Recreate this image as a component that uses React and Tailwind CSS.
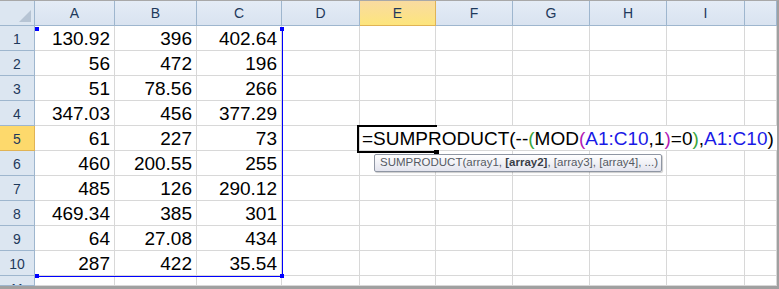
import React from 'react';

const cols = ['A', 'B', 'C', 'D', 'E', 'F', 'G', 'H', 'I', ''];

const data = [
  ['130.92', '396', '402.64'],
  ['56', '472', '196'],
  ['51', '78.56', '266'],
  ['347.03', '456', '377.29'],
  ['61', '227', '73'],
  ['460', '200.55', '255'],
  ['485', '126', '290.12'],
  ['469.34', '385', '301'],
  ['64', '27.08', '434'],
  ['287', '422', '35.54'],
];

const headFont = { fontFamily: '"Liberation Sans", Arial, sans-serif' };
const cellFont = { fontFamily: '"Liberation Sans", Arial, sans-serif' };

const ColHead = ({ label }) => {
  const active = label === 'E';
  return (
    <div
      className={`flex items-center justify-center border-r border-b pt-[1px] text-[14px] text-[#1e395b] ${
        active
          ? 'bg-gradient-to-b from-[#f9dba0] to-[#fde57c] border-[#e0b355]'
          : 'bg-gradient-to-b from-[#e4ecf6] to-[#d9e3f0] border-[#9eb6ce]'
      }`}
      style={headFont}
    >
      {label}
    </div>
  );
};

const RowHead = ({ n }) => {
  const active = n === 5;
  return (
    <div
      className={`flex items-start justify-center overflow-hidden border-r border-b pt-[5px] text-[14px] leading-[16px] text-[#1e395b] ${
        active ? 'bg-[#fdd96c] border-[#e0b355]' : 'bg-[#dce6f1] border-[#9eb6ce]'
      }`}
      style={headFont}
    >
      {n}
    </div>
  );
};

const Cell = ({ children }) => (
  <div
    className="flex items-end justify-end border-r border-b border-[#d8d8d8] bg-white pr-[4px] pb-[2px] text-[19px] leading-[19px] text-black"
    style={cellFont}
  >
    {children}
  </div>
);

const Formula = () => (
  <div
    className="col-span-6 flex items-end border-b border-[#d8d8d8] bg-white pl-[2px] pb-[2px] text-[19px] leading-[19px] whitespace-nowrap text-black"
    style={cellFont}
  >
    <span>=SUMPRODUCT(--</span>
    <span className="text-[#3aa63a]">(</span>
    <span>MOD</span>
    <span className="text-[#b41ab4]">(</span>
    <span className="text-[#1a1ae6]">A1:C10</span>
    <span>,1</span>
    <span className="text-[#b41ab4]">)</span>
    <span>=0</span>
    <span className="text-[#3aa63a]">)</span>
    <span>,</span>
    <span className="text-[#1a1ae6]">A1:C10</span>
    <span>)</span>
  </div>
);

export default function App() {
  return (
    <div className="relative h-[289px] w-[779px] overflow-hidden border-t border-r-2 border-b-[3px] border-t-[#a8a8a8] border-r-[#a0a0a0] border-b-[#a0a0a0] bg-white">
      <div className="grid grid-cols-[35px_80px_82px_85px_78px_76px_77px_77px_77px_78px_32px] grid-rows-[25px_repeat(10,25px)_10px]">
        <div className="relative border-r border-b border-[#9eb6ce] bg-[#dce6f1]">
          <svg className="absolute right-[3px] bottom-[3px]" width="12" height="12" viewBox="0 0 12 12">
            <polygon points="12,0 12,12 0,12" fill="#b6c4d4" />
          </svg>
        </div>
        {cols.map((c, i) => (
          <ColHead key={i} label={c} />
        ))}

        {data.map((row, r) => (
          <React.Fragment key={r}>
            <RowHead n={r + 1} />
            {row.map((v, i) => (
              <Cell key={i}>{v}</Cell>
            ))}
            <Cell />
            {r === 4 ? (
              <Formula />
            ) : (
              <>
                <Cell />
                <Cell />
                <Cell />
                <Cell />
                <Cell />
                <Cell />
              </>
            )}
          </React.Fragment>
        ))}

        <RowHead n={11} />
        {cols.map((c, i) => (
          <Cell key={i} />
        ))}
      </div>

      {/* range highlight A1:C10 */}
      <div className="absolute left-[282px] top-[26px] h-[250px] w-px bg-[#0000ff]" />
      <div className="absolute left-[35px] top-[275px] h-px w-[248px] bg-[#0000ff]" />
      <div className="absolute left-[35px] top-[26px] h-[4px] w-[4px] bg-[#0000ff]" />
      <div className="absolute left-[280px] top-[26px] h-[4px] w-[4px] bg-[#0000ff]" />
      <div className="absolute left-[35px] top-[273px] h-[4px] w-[4px] bg-[#0000ff]" />
      <div className="absolute left-[280px] top-[273px] h-[4px] w-[4px] bg-[#0000ff]" />

      {/* active cell E5 */}
      <div className="absolute left-[357px] top-[124px] h-[28px] w-[80px] border-t-2 border-l-2 border-b-2 border-black" />
      <div className="absolute left-[434px] top-[149px] h-[5px] w-[5px] bg-black" />

      {/* function tooltip */}
      <div
        className="absolute left-[374px] top-[153px] flex h-[18px] w-[288px] items-center rounded-[2px] border border-[#8f96a3] bg-gradient-to-b from-white to-[#e3e4ee] pl-[5px] text-[11.5px] text-[#555a63] shadow-[1px_1px_1px_rgba(0,0,0,0.2)] whitespace-pre"
        style={{ fontFamily: '"Liberation Sans", Arial, sans-serif' }}
      >
        SUMPRODUCT(array1, <b className="text-[#3a3f48]">[array2]</b>, [array3], [array4], ...)
      </div>
    </div>
  );
}
